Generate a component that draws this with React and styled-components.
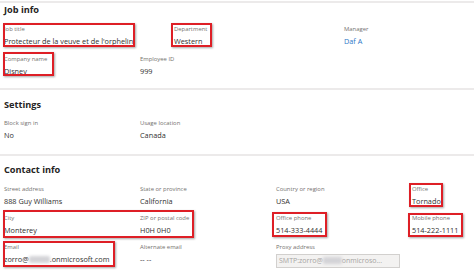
import styled, { createGlobalStyle } from "styled-components";

const GlobalStyle = createGlobalStyle`
  body {
    margin: 0;
    background: #ffffff;
    font-family: "Open Sans", "Noto Sans", sans-serif;
    color: #323130;
  }
`;

const Page = styled.div`
  position: relative;
  width: 474px;
  height: 279px;
  overflow: hidden;
  background: #ffffff;
`;

const Section = styled.section`
  border-top: 2px solid #eceaea;
  margin-top: ${(p) => (p.$first ? "1px" : "0")};
  padding: ${(p) => (p.$first ? "0 0 10.5px" : "7.5px 0 11.5px")};
  padding-left: 4px;
`;

const Heading = styled.h2`
  margin: 0 0 6.5px;
  font-size: 9.2px;
  font-weight: 700;
  line-height: 14px;
  color: #252423;
`;

const Rows = styled.div`
  display: flex;
  flex-direction: column;
  gap: ${(p) => p.$gap ?? 5}px;
`;

const Row = styled.div`
  display: grid;
  grid-template-columns: ${(p) => p.$cols || "repeat(4, 136px)"};
`;

const Field = styled.div`
  display: flex;
  flex-direction: column;
  min-width: 0;
`;

const Label = styled.div`
  font-size: 5.9px;
  line-height: 11px;
  color: #74726f;
  white-space: nowrap;
`;

const Value = styled.div`
  margin-top: -1px;
  font-size: 7.3px;
  line-height: 14px;
  color: ${(p) => (p.$link ? "#2b77c8" : "#323130")};
  white-space: nowrap;
`;

const Blur = styled.span`
  display: inline-block;
  width: ${(p) => p.$w}px;
  height: 7px;
  vertical-align: -1px;
  background: #d3d3d7;
  filter: blur(1.6px);
  border-radius: 2px;
`;

const ReadOnlyInput = styled.div`
  margin-top: 1px;
  width: 124px;
  height: 14px;
  box-sizing: border-box;
  border: 1px solid #d2d0ce;
  background: #f3f2f1;
  color: #a6a4a2;
  font-size: 7px;
  line-height: 12px;
  padding-left: 2px;
  white-space: nowrap;
  overflow: hidden;
`;

const Callout = styled.div`
  position: absolute;
  left: ${(p) => p.$x}px;
  top: ${(p) => p.$y}px;
  width: ${(p) => p.$w}px;
  height: ${(p) => p.$h}px;
  box-sizing: border-box;
  border: 2px solid #de1f26;
  box-shadow: 1px 1px 2px rgba(0, 0, 0, 0.35);
  pointer-events: none;
`;

const callouts = [
  { x: 3, y: 23, w: 132, h: 24 },
  { x: 171, y: 23, w: 41, h: 24 },
  { x: 3, y: 52, w: 51, h: 24 },
  { x: 409, y: 183, w: 34, h: 24 },
  { x: 3, y: 210, w: 191, h: 28 },
  { x: 272, y: 212, w: 55, h: 25 },
  { x: 408, y: 213, w: 55, h: 24 },
  { x: 3, y: 241, w: 112, h: 26 },
];

function Item({ label, value, link }) {
  return (
    <Field>
      <Label>{label}</Label>
      <Value $link={link}>{value}</Value>
    </Field>
  );
}

export default function App() {
  return (
    <Page>
      <GlobalStyle />

      <Section $first>
        <Heading>Job info</Heading>
        <Rows $gap={6}>
          <Row $cols="170px 170px auto">
            <Item label="Job title" value="Protecteur de la veuve et de l'orphelin" />
            <Item label="Department" value="Western" />
            <Item label="Manager" value="Daf A" link />
          </Row>
          <Row>
            <Item label="Company name" value="Disney" />
            <Item label="Employee ID" value="999" />
          </Row>
        </Rows>
      </Section>

      <Section>
        <Heading>Settings</Heading>
        <Rows>
          <Row>
            <Item label="Block sign in" value="No" />
            <Item label="Usage location" value="Canada" />
          </Row>
        </Rows>
      </Section>

      <Section>
        <Heading>Contact info</Heading>
        <Rows $gap={5}>
          <Row>
            <Item label="Street address" value="888 Guy Williams" />
            <Item label="State or province" value="California" />
            <Item label="Country or region" value="USA" />
            <Item label="Office" value="Tornado" />
          </Row>
          <Row>
            <Item label="City" value="Monterey" />
            <Item label="ZIP or postal code" value="H0H 0H0" />
            <Item label="Office phone" value="514-333-4444" />
            <Item label="Mobile phone" value="514-222-1111" />
          </Row>
          <Row>
            <Item
              label="Email"
              value={
                <>
                  zorro@<Blur $w={21} />.onmicrosoft.com
                </>
              }
            />
            <Item label="Alternate email" value="-- --" />
            <Field>
              <Label>Proxy address</Label>
              <ReadOnlyInput>
                SMTP:zorro@<Blur $w={19} />onmicroso...
              </ReadOnlyInput>
            </Field>
          </Row>
        </Rows>
      </Section>

      {callouts.map((c, i) => (
        <Callout key={i} $x={c.x} $y={c.y} $w={c.w} $h={c.h} />
      ))}
    </Page>
  );
}
